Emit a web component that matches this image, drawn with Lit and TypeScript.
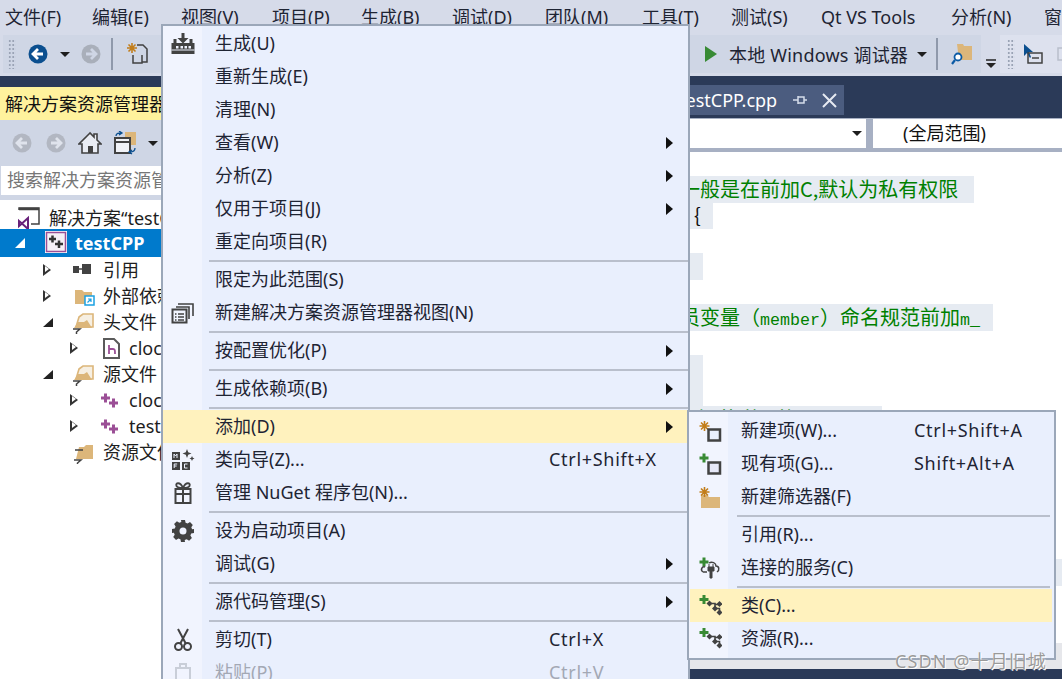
import { LitElement, html, css, svg } from "lit";
import { customElement } from "lit/decorators.js";

const D = "#424242";
const ic = (w: number, h: number, body: any) =>
  html`<svg width=${w} height=${h} viewBox="0 0 ${w} ${h}">${body}</svg>`;

const star = (x: number, y: number) => svg`<g stroke="#c27d1a" stroke-width="1.600"><path d="M${x - 5} ${y}h10M${x} ${y - 5}v10M${x - 3.5} ${y - 3.5}l7 7M${x + 3.5} ${y - 3.5}l-7 7"/></g>`;
const plus = (x: number, y: number, c = "#388a34") => svg`<path d="M${x - 4.5} ${y}h9M${x} ${y - 4.5}v9" stroke=${c} stroke-width="3"/>`;
const node = (x: number, y: number) => svg`<path d="M${x - 3} ${y}l3-3 3 3-3 3z" fill=${D}/>`;
const clsNodes = svg`<path d="M11.500 9.500H17v5M17 10.500h4.500M17 14.500h4.500v4" fill="none" stroke=${D} stroke-width="1.600"/>${node(11.5, 9.5)}${node(21.5, 10)}${node(17, 14.5)}${node(21.5, 18.5)}`;

const icons: Record<string, any> = {
  build: ic(24, 24, svg`<path d="M10.500 1h3v5h4l-5.500 5.500L6.500 6h4z" fill=${D}/><path d="M2.500 7h3v4h13V7h3v4h2v11H.5V11h2z" fill=${D}/><path d="M5 14h2.500v2.500H5zM9.500 14H12v2.500H9.500zM13.500 14H16v2.500h-2.500zM17.500 14H20v2.500h-2.500z" fill="#eef2fe"/><path d="M.5 18h23" stroke="#eef2fe" stroke-width="1"/>`),
  view: ic(24, 22, svg`<path d="M7 2h15v12" fill="none" stroke=${D} stroke-width="1.600"/><path d="M5 5h13v12" fill="none" stroke=${D} stroke-width="1.600"/><rect x="1.500" y="7.500" width="14" height="13" fill="#f0f4fe" stroke=${D} stroke-width="2"/><path d="M4 12h1.500M7 12h6M4 15h1.500M7 15h6M4 18h1.500M7 18h6" stroke=${D} stroke-width="1.300"/>`),
  wizard: ic(24, 24, svg`<g fill=${D}><rect x="1" y="4" width="8" height="8"/><rect x="1" y="14" width="8" height="8"/><rect x="11" y="14" width="8" height="8"/><path d="M16 1l1.200 3.300 3.300 1.200-3.300 1.200L16 10l-1.200-3.300-3.300-1.200 3.300-1.200zM21 8l.8 1.700 1.700.8-1.700.8-.8 1.700-.8-1.700-1.700-.8 1.700-.8z"/></g><path d="M3 10V6l1.500 2L6 6v4M3.200 20v-4h3M3.200 18h2.500M16.500 16h-3v4h3" stroke="#eef2fe" fill="none" stroke-width="1"/>`),
  nuget: ic(22, 24, svg`<path d="M11 7C8 0 3 2 4.500 5 5.500 7 9 7 11 7c2 0 5.500 0 6.500-2C19 2 14 0 11 7z" fill="none" stroke=${D} stroke-width="1.800"/><rect x="3.500" y="8" width="15" height="14" fill="none" stroke=${D} stroke-width="2"/><path d="M3 13h16M11 8v14" stroke=${D} stroke-width="2"/>`),
  gear: ic(22, 22, svg`<path d="M9 0h4l.6 2.800 2 .8 2.400-1.500 2.800 2.800-1.500 2.400.8 2L22 9v4l-2.800.6-.8 2 1.500 2.400-2.800 2.800-2.400-1.500-2 .8L13 22H9l-.6-2.800-2-.8L4 19.900 1.200 17.100 2.700 14.700l-.8-2L0 13V9l2.800-.6.8-2L2.100 4 4.900 1.200 7.300 2.700l2-.8z" fill=${D}/><circle cx="11" cy="11" r="3.500" fill="#eef2fe"/>`),
  scissors: ic(20, 24, svg`<path d="M5 1l8 15M15 1L7 16" stroke=${D} stroke-width="2" fill="none"/><circle cx="5.500" cy="18.500" r="3.500" fill="none" stroke=${D} stroke-width="2"/><circle cx="14.500" cy="18.500" r="3.500" fill="none" stroke=${D} stroke-width="2"/>`),
  paste: ic(20, 24, svg`<path d="M3 7h14v16H3zM7 7V3h6v4" fill="none" stroke="#c9ced8" stroke-width="2"/>`),
  newitem: ic(24, 24, svg`${star(6.5, 7)}<rect x="10.500" y="10.500" width="11.500" height="11" fill="#e9effd" stroke=${D} stroke-width="2.500"/>`),
  existing: ic(24, 24, svg`<rect x="10.500" y="10.500" width="11.500" height="11" fill="#e6e8f8" stroke=${D} stroke-width="2.500"/>${plus(6, 6)}`),
  filter: ic(24, 24, svg`<path d="M3 10h6l2 2h11v11H3z" fill="#dcb67a"/>${star(6.5, 7)}`),
  service: ic(24, 24, svg`${plus(6, 6)}<path d="M5 16c-3-2-1-6 2-5M11 7c3-2 7 0 7 3 3 0 4 4 1 6M9 16H5" fill="none" stroke=${D} stroke-width="1.500"/><path d="M10 11h6v4h-2v7h-2v-7h-2zM11 8v3M15 8v3" fill=${D} stroke=${D} stroke-width="1"/>`),
  cls: ic(24, 24, svg`${plus(6, 5.5)}${clsNodes}`),
};

const menu = [
  { i: "build", t: "生成(U)" }, { t: "重新生成(E)" }, { t: "清理(N)" },
  { t: "查看(W)", a: 1 }, { t: "分析(Z)", a: 1 }, { t: "仅用于项目(J)", a: 1 }, { t: "重定向项目(R)" }, 0,
  { t: "限定为此范围(S)" }, { i: "view", t: "新建解决方案资源管理器视图(N)" }, 0,
  { t: "按配置优化(P)", a: 1 }, 0, { t: "生成依赖项(B)", a: 1 }, 0,
  { t: "添加(D)", a: 1, h: 1 }, { i: "wizard", t: "类向导(Z)...", s: "Ctrl+Shift+X" }, { i: "nuget", t: "管理 NuGet 程序包(N)..." }, 0,
  { i: "gear", t: "设为启动项目(A)" }, { t: "调试(G)", a: 1 }, 0, { t: "源代码管理(S)", a: 1 }, 0,
  { i: "scissors", t: "剪切(T)", s: "Ctrl+X" }, { i: "paste", t: "粘贴(P)", s: "Ctrl+V", d: 1 },
] as any[];

const sub = [
  { i: "newitem", t: "新建项(W)...", s: "Ctrl+Shift+A" }, { i: "existing", t: "现有项(G)...", s: "Shift+Alt+A" }, { i: "filter", t: "新建筛选器(F)" }, 0,
  { t: "引用(R)..." }, { i: "service", t: "连接的服务(C)" }, 0,
  { i: "cls", t: "类(C)...", h: 1 }, { i: "cls", t: "资源(R)..." },
] as any[];

const menubar: [string, number][] = [["文件(F)", 87], ["编辑(E)", 89], ["视图(V)", 91], ["项目(P)", 89], ["生成(B)", 91], ["调试(D)", 93], ["团队(M)", 97], ["工具(T)", 89], ["测试(S)", 90], ["Qt VS Tools", 130], ["分析(N)", 93], ["窗口(W)", 80]];

const folder = (c = "#dcb67a") => svg`<path d="M3 6h7l2 2h8v12H3z" fill=${c}/>`;
const openFolder = svg`<path d="M7 7l4-3h10v13H4z" fill="#f6efe2" stroke="#dcb67a" stroke-width="1.600"/><path d="M2 18l4-6h6l3-2 5 8z" fill="#dcb67a"/><path d="M1 19h7l-3.500 3v2" fill="none" stroke="#424242" stroke-width="1.500"/>`;
const cpp = svg`<path d="M3 10h9M7.500 5.500v9M11 15h9M15.500 10.500v9" stroke="#9b4f96" stroke-width="3"/>`;

const tree = [
  { x: 20, icon: svg`<path d="M1 4V2h20v16H13" fill="none" stroke="#424242" stroke-width="1.500"/><path d="M1 3h20" stroke="#424242" stroke-width="2.500"/><path d="M1 15l3 2.500L10 12v11l-6-5.500L1 20z" fill="none" stroke="#68217a" stroke-width="2"/>`, t: "解决方案“testCPP”(1 个项目)", lx: 49 },
  { x: 46, sel: 1, tw: "open", tx: 15, icon: svg`<rect x="1" y="1" width="22" height="22" fill="#fff"/><rect x="2.500" y="2.500" width="19" height="19" fill="#f5f0f6" stroke="#9b4f96" stroke-width="1.500"/><path d="M5 9h7M8.500 5.500v7" stroke="#333" stroke-width="2.500"/><path d="M11 14h8M15 10.500v7.500" stroke="#333" stroke-width="2.500"/>`, t: "testCPP", lx: 75 },
  { x: 74, tw: "closed", tx: 43, icon: svg`<path d="M1 8h6v7H1z" fill="#424242"/><path d="M7 11h3" stroke="#424242" stroke-width="1.500"/><path d="M10 6h9v10h-9z" fill="#424242"/>`, t: "引用", lx: 103 },
  { x: 74, tw: "closed", tx: 43, icon: svg`${folder()}<rect x="13" y="12" width="9" height="9" fill="#fff" stroke="#1ba1e2" stroke-width="1.500"/><path d="M15.500 18.500l3-3M16 15h3v3" stroke="#1ba1e2" stroke-width="1.200" fill="none"/>`, t: "外部依赖项", lx: 103 },
  { x: 74, tw: "open-dark", tx: 43, icon: openFolder, t: "头文件", lx: 103 },
  { x: 102, tw: "closed", tx: 70, icon: svg`<path d="M4 3h10l5 5v14H4z" fill="#fff" stroke="#5a5a5a" stroke-width="2"/><path d="M9 9v9M9 13h4c2 0 2 1 2 5" fill="none" stroke="#9b4f96" stroke-width="1.800"/>`, t: "clock.h", lx: 129 },
  { x: 74, tw: "open-dark", tx: 43, icon: openFolder, t: "源文件", lx: 103 },
  { x: 100, tw: "closed", tx: 70, icon: cpp, t: "clock.cpp", lx: 129 },
  { x: 100, tw: "closed", tx: 70, icon: cpp, t: "testCPP.cpp", lx: 129 },
  { x: 74, icon: svg`<path d="M7 7h5l2-2h7v14H4z" fill="#dcb67a"/><path d="M3 10h8M2 20h7l-3.500 3v1" fill="none" stroke="#424242" stroke-width="1.500"/>`, t: "资源文件", lx: 103 },
] as any[];

const code = [
  { w: 974, x: 680, cjk: "一般是在前加C,默认为私有权限" },
  { w: 713, t: "{", x: 694 },
  0,
  { w: 703 },
  0,
  { w: 993, x: 660, cjk: "成员变量（", m: "member", cjk2: "）命名规范前加", m2: "m_" },
  0,
  { w: 703 },
  { w: 703 },
  { w: 882, x: 693, cjk: "有 节 的 . 的" },
  0, 0, 0, 0, 0,
  { w: 1062 },
] as any[];

@customElement("app-root")
export class AppRoot extends LitElement {
  static styles = css`
    :host { display: block; position: relative; width: 1062px; height: 679px; overflow: hidden; background: #2b3a58;
      font-family: "Noto Sans", "Noto Sans CJK SC", sans-serif; font-size: 18px; color: #1e2433; }
    .menubar { height: 33px; background: #d6dbe9; display: flex; padding-left: 5px; align-items: center; white-space: nowrap; overflow: hidden; line-height: 30px; }
    .menubar span { flex: none; }
    .toolbars { height: 43px; background: #d6dbe9; display: flex; align-items: flex-start; padding: 2px 0 0 3px; box-sizing: border-box; }
    .tb { height: 38px; background: #cfd6e5; display: flex; align-items: center; flex: none; position: relative; white-space: nowrap; }
    .tb1 { width: 978px; }
    .tb2 { flex: 1; background: #dde1ee; padding-left: 7px; }
    .ovf { width: 19px; height: 38px; display: flex; flex-direction: column; justify-content: flex-end; align-items: center; padding-bottom: 5px; box-sizing: border-box; flex: none; }
    .grip { width: 8px; height: 30px; flex: none; background-image: radial-gradient(circle, #9aa3b5 1px, transparent 1.200px); background-size: 3.500px 4px; }
    .sep { width: 2px; height: 32px; background: #8f99ab; flex: none; }
    .caret { width: 0; height: 0; border: 5px solid transparent; border-top: 5px solid #1e1e1e; border-bottom: 0; flex: none; }
    .sp { flex: none; }
    .area { display: flex; height: 603px; }
    .left { width: 170px; flex: none; padding-top: 11px; display: flex; flex-direction: column; background: #2b3a58; }
    .ptitle { height: 33px; background: #fff29d; color: #111; line-height: 34px; padding-left: 5px; white-space: nowrap; flex: none; overflow: hidden; }
    .ptools { height: 46px; background: #cfd6e5; display: flex; align-items: center; flex: none; }
    .psearchw { height: 34px; background: #cfd6e5; flex: none; padding: 0 0 5px 1px; box-sizing: border-box; }
    .psearch { height: 29px; background: #fff; color: #777; line-height: 29px; padding-left: 6px; white-space: nowrap; overflow: hidden; }
    .tree { flex: 1; background: #fff; padding-top: 5px; }
    .tr { height: 26px; position: relative; white-space: nowrap; line-height: 26px; color: #1e1e1e; }
    .tr.first { height: 24px; }
    .tr.sel { background: #007acc; color: #fff; font-weight: 700; height: 28px; line-height: 28px; }
    .tr svg { position: absolute; top: 1px; }
    .tr .lbl { position: absolute; top: 0; }
    .tw { position: absolute; top: 7px; width: 0; height: 0; }
    .tw.closed { border-left: 8px solid #333; border-top: 6.500px solid transparent; border-bottom: 6.500px solid transparent; }
    .tw.closed::after { content: ""; position: absolute; left: -6.500px; top: -3.800px; border-left: 4.500px solid #fff; border-top: 3.800px solid transparent; border-bottom: 3.800px solid transparent; }
    .tw.open { border-bottom: 10px solid #fff; border-left: 10px solid transparent; top: 9px; }
    .tw.open-dark { border-bottom: 9px solid #222; border-left: 10px solid transparent; top: 9px; }
    .main { flex: 1; display: flex; flex-direction: column; min-width: 0; }
    .tabs { height: 42px; flex: none; padding: 9px 0 0 490px; box-sizing: border-box; }
    .tab { width: 184px; height: 30px; background: #4b5c7f; color: #fff; display: flex; align-items: center; padding-left: 19px; box-sizing: border-box; white-space: nowrap; position: relative; }
    .tab .nm { width: 113px; flex: none; }
    .drops { height: 34px; background: #a7b0c3; display: flex; gap: 7px; flex: none; padding-top: 1px; box-sizing: border-box; }
    .dd { height: 29px; background: #fff; position: relative; line-height: 29px; color: #111; }
    .dd .caret { position: absolute; right: 4px; top: 12px; }
    .dd1 { width: 696px; }
    .dd2 { flex: 1; padding-left: 30px; }
    .editor { flex: 1; background: #fff; padding-top: 24px; position: relative; overflow: hidden; }
    .row { height: 25.500px; position: relative; white-space: nowrap; }
    .hl { position: absolute; left: 0; top: 0; height: 27px; background: #e6ebf2; }
    .code { position: absolute; top: -1px; color: #008000; font-size: 20px; line-height: 27px; font-family: "Noto Sans CJK SC", sans-serif; }
    .code b { font: 16.670px "Liberation Mono", monospace; }
    .code.br { color: #111; }
    .status { position: absolute; left: 0; right: 0; bottom: 0; height: 36px; }
    .status i { display: block; height: 26px; background: #e6e7eb; }
    .status u { display: block; height: 10px; background: #2b3a58; }
    .pop { position: absolute; background: #e9effd; border: 2px solid #9ba7b9; box-sizing: border-box; }
    .pop .gut { position: absolute; left: 0; top: 0; bottom: 0; width: 39px; background: #f1f4fe; }
    .m1 { left: 161px; top: 24px; width: 529px; height: 700px; padding-top: 1px; }
    .m2 { left: 687px; top: 410px; width: 369px; height: 250px; padding: 2px 2px 0 1px; }
    .it { height: 33px; display: grid; grid-template-columns: 39px 347px 117px 20px; align-items: center; position: relative; white-space: nowrap; line-height: 33px; }
    .m2 .it { grid-template-columns: 39px 185px 130px; }
    .it.h { background: #fff2be; }
    .it.d { color: #a3a8b4; }
    .it .ico { display: flex; justify-content: center; align-items: center; height: 33px; width: 39px; }
    .it .tx { padding-left: 13px; }
    .m2 .it .tx { padding-left: 12px; }
    .it .sc { letter-spacing: .7px; }
    .it .arr { width: 0; height: 0; border-left: 7px solid #111; border-top: 6px solid transparent; border-bottom: 6px solid transparent; }
    .s { height: 5px; position: relative; }
    .s::after { content: ""; position: absolute; left: 46px; right: 0; top: 1.500px; height: 2px; background: #b9bfcc; }
    .m2 .s::after { left: 47px; right: 2px; }
    .wm { position: absolute; left: 895px; top: 648px; font-size: 18px; line-height: 26px; color: #9a9a9a; letter-spacing: 1.100px; text-shadow: 0 0 1px #fff, 1px 1px 0 #fff; white-space: nowrap; }
  `;

  private items(list: any[]) {
    return list.map((m) => m === 0 ? html`<div class="s"></div>` : html`
      <div class="it ${m.h ? "h" : ""} ${m.d ? "d" : ""}">
        <div class="ico">${m.i ? icons[m.i] : ""}</div>
        <div class="tx">${m.t}</div>
        <div class="sc">${m.s ?? ""}</div>
        ${m.a ? html`<div class="arr"></div>` : ""}
      </div>`);
  }

  render() {
    const navBack = (c: string, f: string) => ic(20, 20, svg`<circle cx="10" cy="10" r="9.500" fill=${c}/><path d="M15 10H6M10 5l-5 5 5 5" fill="none" stroke=${f} stroke-width="2.800"/>`);
    const navFwd = (c: string, f: string) => ic(20, 20, svg`<circle cx="10" cy="10" r="9.500" fill=${c}/><path d="M5 10h9M10 5l5 5-5 5" fill="none" stroke=${f} stroke-width="2.800"/>`);
    return html`
      <div class="menubar">${menubar.map(([m, w]) => html`<span style="width:${w}px">${m}</span>`)}</div>
      <div class="toolbars">
        <div class="tb tb1">
          <div class="sp" style="width:5px"></div><div class="grip"></div>
          <div class="sp" style="width:12px"></div>${navBack("#0b4f8f", "#fff")}
          <div class="sp" style="width:12px"></div><div class="caret"></div>
          <div class="sp" style="width:11px"></div>${navFwd("#a9afba", "#cfd6e5")}
          <div class="sp" style="width:10px"></div><div class="sep"></div>
          <div class="sp" style="width:13px"></div>
          ${ic(22, 24, svg`${star(6, 6)}<path d="M11 3h6l4 4v13h-5M7 13v8h9v-8" fill="none" stroke="#424242" stroke-width="1.500"/>`)}
          <div class="sp" style="width:556px"></div>
          ${ic(14, 18, svg`<path d="M1 1l12 8-12 8z" fill="#388a34"/>`)}
          <div class="sp" style="width:11px"></div><span style="width:188px;letter-spacing:.2px">本地 Windows 调试器</span>
          <div class="caret"></div>
          <div class="sp" style="width:9px"></div><div class="sep"></div>
          <div class="sp" style="width:13px"></div>
          ${ic(22, 24, svg`<path d="M6 2h6l1 2h8v14H8" fill="#dcb67a"/><circle cx="7" cy="15" r="3.500" fill="#fff" stroke="#0b5aa5" stroke-width="1.800"/><path d="M4 18l-3 4" stroke="#0b5aa5" stroke-width="2.200"/>`)}
        </div>
        <div class="ovf">${ic(10, 9, svg`<path d="M0 1h10" stroke="#222" stroke-width="1.500"/><path d="M0 4h10l-5 5z" fill="#222"/>`)}</div>
        <div class="tb tb2">
          <div class="grip"></div>
          <div class="sp" style="width:8px"></div>
          ${ic(20, 22, svg`<path d="M1 1v12l3-3 3 5 1-1-2-5h4z" fill="#0b4f8f"/><path d="M5 10h14v10H5z" fill="none" stroke="#424242" stroke-width="1.500"/><path d="M9 15h7" stroke="#424242" stroke-width="1.500"/>`)}
          <div class="sp" style="width:13px"></div>
          ${ic(14, 20, svg`<path d="M2 4h10v12H2z" fill="none" stroke="#b9bfcc" stroke-width="1.500"/>`)}
        </div>
      </div>
      <div class="area">
        <div class="left">
          <div class="ptitle">解决方案资源管理器</div>
          <div class="ptools">
            <div class="sp" style="width:12px"></div>${navBack("#b2b7c2", "#dfe3ec")}
            <div class="sp" style="width:14px"></div>${navFwd("#b2b7c2", "#dfe3ec")}
            <div class="sp" style="width:12px"></div>
            ${ic(24, 24, svg`<path d="M12 2L1 13h3v9h16v-9h3l-4-4V3h-3v3z" fill="#e9ecf3" stroke="#424242" stroke-width="1.600"/><rect x="10" y="15" width="5" height="7" fill="#424242"/>`)}
            <div class="sp" style="width:11px"></div>
            ${ic(24, 24, svg`<path d="M12 1h11v13H16V7h-4z" fill="#dcb67a"/><rect x="2" y="7" width="15" height="15" fill="#f0f2f7" stroke="#424242" stroke-width="2"/><path d="M2 11h15" stroke="#424242" stroke-width="2"/><path d="M3 5c0-3 3-3 5-3M6 0l3 2-3 2" fill="none" stroke="#0b4f8f" stroke-width="1.300"/><path d="M22 17c0 3-2 4-5 4M19 19l-3 2 3 2" fill="none" stroke="#0b4f8f" stroke-width="1.300"/>`)}
            <div class="sp" style="width:11px"></div><div class="caret"></div>
          </div>
          <div class="psearchw"><div class="psearch">搜索解决方案资源管理器(Ctrl+;)</div></div>
          <div class="tree">
            ${tree.map((r, i) => html`
              <div class="tr ${r.sel ? "sel" : ""} ${i === 0 ? "first" : ""}">
                ${r.tw ? html`<span class="tw ${r.tw}" style="left:${r.tx}px"></span>` : ""}
                <svg width="24" height="24" viewBox="0 0 24 24" style="left:${r.x - 2}px">${r.icon}</svg>
                <span class="lbl" style="left:${r.lx}px">${r.t}</span>
              </div>`)}
          </div>
        </div>
        <div class="main">
          <div class="tabs">
            <div class="tab"><span class="nm">testCPP.cpp</span>
              ${ic(16, 16, svg`<path d="M1 8h5M6 4v8M6 5h6v6H6M12 8h3" fill="none" stroke="#d5dcea" stroke-width="1.500"/>`)}
              <span style="width:14px"></span>
              ${ic(15, 15, svg`<path d="M1 1l13 13M14 1L1 14" stroke="#e6eaf2" stroke-width="2"/>`)}
            </div>
          </div>
          <div class="drops">
            <div class="dd dd1"><div class="caret"></div></div>
            <div class="dd dd2">(全局范围)</div>
          </div>
          <div class="editor">
            ${code.map((c) => html`<div class="row">
              ${c ? html`<div class="hl" style="width:${c.w - 170}px"></div>
                ${c.t ? html`<span class="code br" style="left:${c.x - 170}px">${c.t}</span>` : ""}
                ${c.cjk ? html`<span class="code" style="left:${c.x - 170}px">${c.cjk}${c.m ? html`<b>${c.m}</b>${c.cjk2}<b>${c.m2}</b>` : ""}</span>` : ""}` : ""}
            </div>`)}
            <div class="status"><i></i><u></u></div>
          </div>
        </div>
      </div>
      <div class="pop m1"><div class="gut"></div><div style="position:relative">${this.items(menu)}</div></div>
      <div class="pop m2"><div class="gut"></div><div style="position:relative">${this.items(sub)}</div></div>
      <div class="wm">CSDN @十月旧城</div>
    `;
  }
}
